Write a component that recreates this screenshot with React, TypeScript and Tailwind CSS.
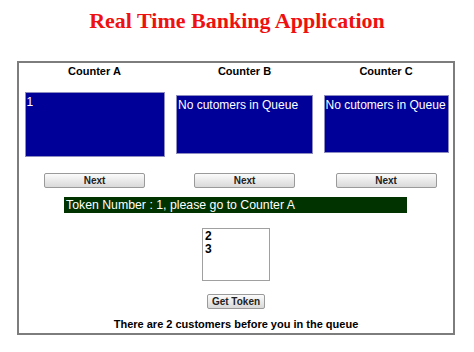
import React from 'react';

// Counter queue boxes, one per teller
const counters = [
  { name: 'Counter A', text: '1', box: 'mt-[14px] w-[140px] h-[65px]' },
  { name: 'Counter B', text: 'No cutomers in Queue', box: 'mt-[17px] w-[137px] h-[59px]' },
  { name: 'Counter C', text: 'No cutomers in Queue', box: 'mt-[17px] w-[125px] h-[58px]' },
];

function GrayButton({ label, className }: { label: string; className: string }) {
  return (
    <button
      className={`h-[15px] rounded-[2px] border border-[#9a9a9a] bg-gradient-to-b from-[#fbfbfb] to-[#d9d9d9] text-[10px] font-bold leading-[13px] text-[#222] ${className}`}
    >
      {label}
    </button>
  );
}

export default function App() {
  return (
    <div className="w-[474px] h-[352px] bg-white font-['Liberation_Sans',Arial,sans-serif] text-black">
      <h1 className="pt-[8px] text-center font-['Liberation_Serif','Times_New_Roman',serif] text-[22px] font-bold leading-[26px] text-[#ee1111]">
        Real Time Banking Application
      </h1>

      <div className="ml-[17px] mt-[27px] w-[438px] border-2 border-[#7d7d7d] pt-[1px] pb-[2px]">
        <div className="grid grid-cols-[151px_149px_134px]">
          {counters.map((c) => (
            <div key={c.name} className="flex flex-col items-center">
              <div className="h-[14px] text-[11px] font-bold leading-[14px]">{c.name}</div>
              <div className={`${c.box} border border-[#8c8cc0] bg-[#000099] px-[1px] text-[12px] leading-[14px] text-white`}>
                <div className="pt-[2px]">{c.text}</div>
              </div>
            </div>
          ))}
        </div>

        <div className="mt-[16px] grid grid-cols-[151px_149px_134px]">
          {counters.map((c) => (
            <div key={c.name} className="flex justify-center">
              <GrayButton label="Next" className="w-[101px]" />
            </div>
          ))}
        </div>

        <div className="ml-[45px] mt-[9px] h-[16px] w-[343px] bg-[#003300] pl-[2px] text-[12.3px] leading-[16px] text-white">
          Token Number : 1, please go to Counter A
        </div>

        <div className="ml-[183px] mt-[15px] h-[53px] w-[68px] border border-[#a0a0a0] bg-white pl-[2px] pt-[1px] text-[12px] font-bold leading-[13px]">
          <div>2</div>
          <div>3</div>
        </div>

        <div className="mt-[13px] flex justify-center">
          <GrayButton label="Get Token" className="w-[58px]" />
        </div>

        <div className="mt-[8px] text-center text-[11px] font-bold leading-[14px]">
          There are 2 customers before you in the queue
        </div>
      </div>
    </div>
  );
}
